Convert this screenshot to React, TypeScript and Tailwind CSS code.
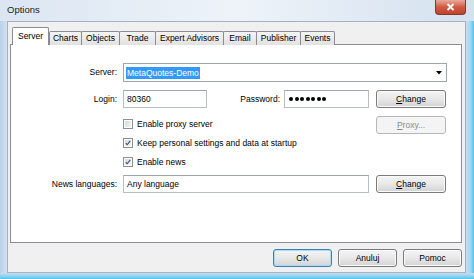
import React from 'react'

const tabs = [
  { label: 'Charts', w: 'w-[33px]' },
  { label: 'Objects', w: 'w-[39px]' },
  { label: 'Trade', w: 'w-[37px]' },
  { label: 'Expert Advisors', w: 'w-[69px]' },
  { label: 'Email', w: 'w-[34px]' },
  { label: 'Publisher', w: 'w-[45px]' },
  { label: 'Events', w: 'w-[35px]' },
]

function WinButton({ children, disabled = false, def = false, className = '' }: { children: React.ReactNode; disabled?: boolean; def?: boolean; className?: string }) {
  if (disabled) {
    return (
      <div className={`h-[18px] flex items-center justify-center rounded-[3px] border border-[#b5b8bb] bg-[#f4f4f4] text-[#8a8a8a] ${className}`}>
        {children}
      </div>
    )
  }
  return (
    <div
      className={`h-[18px] flex items-center justify-center rounded-[3px] border bg-gradient-to-b from-[#f4f4f4] via-[#e8e8e8] to-[#d3d3d3] text-black ${
        def ? 'border-[#3c7fb1] shadow-[inset_0_0_0_1px_#a9dcf5]' : 'border-[#7a7a7a] shadow-[inset_0_0_0_1px_#fbfbfb]'
      } ${className}`}
    >
      {children}
    </div>
  )
}

function CheckBox({ checked, label }: { checked: boolean; label: string }) {
  return (
    <div className="flex items-center gap-[4px]">
      <div className="w-[10px] h-[10px] border border-[#8e8f8f] bg-white p-px">
        <div className="w-full h-full bg-gradient-to-br from-[#d6d8da] to-[#f6f6f6] flex items-center justify-center">
          {checked && (
            <svg width="8" height="8" viewBox="0 0 8 8">
              <path d="M1 4.2 L3 6.3 L7 1.2" fill="none" stroke="#34508a" strokeWidth="1.5" />
            </svg>
          )}
        </div>
      </div>
      <span>{label}</span>
    </div>
  )
}

const inputCls = 'h-[18px] bg-white border border-[#b9bdc4] border-t-[#a0a4ab] flex items-center pl-[3px]'

export default function App() {
  return (
    <div
      className="w-[474px] h-[279px] flex flex-col bg-[#c9d9ec] text-[8.5px] text-black overflow-hidden relative"
      style={{ fontFamily: '"Liberation Sans", Arial, sans-serif' }}
    >
      {/* title bar */}
      <div className="h-[21px] shrink-0 flex items-center pl-[7px] bg-gradient-to-r from-[#dbe6f2] via-[#eef3f9] to-[#d4e1ef]">
        <span className="text-[9.5px] text-[#1b1b1b]">Options</span>
      </div>
      <div className="absolute top-0 right-[8px] w-[31px] h-[15px] rounded-b-[4px] border border-t-0 border-[#8a3527] bg-gradient-to-b from-[#e9a99a] via-[#cf5a43] to-[#c0442c] flex items-center justify-center">
        <svg width="9" height="8" viewBox="0 0 9 8">
          <path d="M1.5 1 L7.5 7 M7.5 1 L1.5 7" stroke="#ffffff" strokeWidth="1.8" />
        </svg>
      </div>

      <div className="flex flex-1 min-h-0">
        <div className="w-[7px] shrink-0 bg-gradient-to-r from-[#bcd0e8] to-[#d3e1f1]" />
        {/* dialog client area */}
        <div className="flex-1 flex flex-col bg-[#f0f0f0] border border-[#a4b2c3] pl-[2px] pr-[3px] pt-[5px] pb-[5px]">
          {/* tabs */}
          <div className="flex items-end h-[18px] -mb-px ml-[2px] relative z-10">
            <div className="w-[37px] h-[18px] bg-white border border-b-0 border-[#898c95] rounded-t-[2px] flex items-center justify-center pb-[1px]">
              Server
            </div>
            {tabs.map((t, i) => (
              <div
                key={t.label}
                className={`${t.w} ${i > 0 ? '-ml-px' : ''} h-[14px] border border-b-0 border-[#898c95] rounded-t-[2px] bg-gradient-to-b from-[#f4f4f4] to-[#e2e2e2] flex items-center justify-center`}
              >
                {t.label}
              </div>
            ))}
          </div>

          {/* tab panel */}
          <div className="h-[199px] w-[452px] bg-white border border-[#898c95] pt-[18px]">
            {/* server */}
            <div className="flex items-center h-[19px]">
              <div className="w-[106px] text-right">Server:</div>
              <div className="ml-[6px] w-[324px] h-[19px] border border-[#a0a4ab] bg-white flex items-center pl-[2px] pr-[4px]">
                <span className="bg-[#3399ff] text-white px-px leading-[12px]">MetaQuotes-Demo</span>
                <svg className="ml-auto" width="6" height="4" viewBox="0 0 6 4">
                  <path d="M0 0 H6 L3 3.5 Z" fill="#000" />
                </svg>
              </div>
            </div>

            {/* login / password */}
            <div className="flex items-center h-[18px] mt-[8px]">
              <div className="w-[106px] text-right">Login:</div>
              <div className={`ml-[6px] w-[84px] ${inputCls}`}>80360</div>
              <div className="w-[73px] text-right">Password:</div>
              <div className={`ml-[4px] w-[85px] ${inputCls} gap-[1.5px] pl-[4px]`}>
                {Array.from({ length: 7 }).map((_, i) => (
                  <div key={i} className="w-[4px] h-[4px] rounded-full bg-black" />
                ))}
              </div>
              <WinButton className="ml-[7px] w-[70px]">
                <span><span className="underline">C</span>hange</span>
              </WinButton>
            </div>

            {/* proxy */}
            <div className="flex items-center h-[18px] mt-[8px]">
              <div className="ml-[112px] w-[246px] -mt-[2px]">
                <CheckBox checked={false} label="Enable proxy server" />
              </div>
              <WinButton disabled className="ml-[7px] w-[70px]">
                <span><span className="underline">P</span>roxy...</span>
              </WinButton>
            </div>

            <div className="flex items-center h-[18px] ml-[112px]">
              <CheckBox checked label="Keep personal settings and data at startup" />
            </div>
            <div className="flex items-center h-[20px] ml-[112px]">
              <CheckBox checked label="Enable news" />
            </div>

            {/* news languages */}
            <div className="flex items-center h-[18px] mt-[3px]">
              <div className="w-[106px] text-right">News languages:</div>
              <div className={`ml-[6px] w-[246px] ${inputCls}`}>Any language</div>
              <WinButton className="ml-[7px] w-[70px]">
                <span><span className="underline">C</span>hange</span>
              </WinButton>
            </div>
          </div>

          {/* dialog buttons */}
          <div className="flex justify-end gap-[6px] mt-[6px] w-[452px]">
            <WinButton def className="w-[59px]">OK</WinButton>
            <WinButton className="w-[59px]">Anuluj</WinButton>
            <WinButton className="w-[59px]">Pomoc</WinButton>
          </div>
        </div>
        <div className="w-[8px] shrink-0 bg-gradient-to-r from-[#c9dbef] via-[#a9d8f0] to-[#3fc6f0]" />
      </div>
      <div className="h-[6px] shrink-0 bg-gradient-to-b from-[#c9dbef] to-[#43c8f2]" />
    </div>
  )
}
